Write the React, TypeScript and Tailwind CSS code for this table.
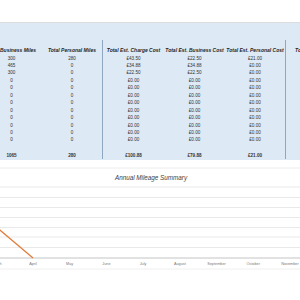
import React from "react";

const zeros = (n: number, v: string) => Array.from({ length: n }, () => v);

const columns = [
  {
    title: "Total Business Miles",
    values: ["300", "465", "300", ...zeros(9, "0")],
    total: "1065",
    border: false,
  },
  {
    title: "Total Personal Miles",
    values: ["280", ...zeros(11, "0")],
    total: "280",
    border: true,
  },
  {
    title: "Total Est. Charge Cost",
    values: ["£43.50", "£34.88", "£22.50", ...zeros(9, "£0.00")],
    total: "£100.88",
    border: false,
  },
  {
    title: "Total Est. Business Cost",
    values: ["£22.50", "£34.88", "£22.50", ...zeros(9, "£0.00")],
    total: "£79.88",
    border: false,
  },
  {
    title: "Total Est. Personal Cost",
    values: ["£21.00", ...zeros(11, "£0.00")],
    total: "£21.00",
    border: true,
  },
  {
    title: "Total Est. Savings",
    values: [] as string[],
    total: "",
    border: false,
  },
];

const months = [
  "March",
  "April",
  "May",
  "June",
  "July",
  "August",
  "September",
  "October",
  "November",
];

const gridLines = [27, 37.5, 47.5, 57.5, 67.5, 77, 87.5];

const Chart = () => {
  const monthX = (i: number) => -3.7 + i * 36.7;
  return (
    <svg width="300" height="140" viewBox="0 0 300 140" className="block">
      <line x1="0" y1="8" x2="300" y2="8" stroke="#ececec" strokeWidth="1" />
      <text
        x="151"
        y="20"
        textAnchor="middle"
        fontSize="6.3"
        fontStyle="italic"
        fill="#404040"
        fontFamily="'Liberation Sans', sans-serif"
      >
        Annual Mileage Summary
      </text>
      {gridLines.map((y) => (
        <line key={y} x1="0" y1={y} x2="300" y2={y} stroke="#e9e9e9" strokeWidth="1" />
      ))}
      <line x1="0" y1="98" x2="300" y2="98" stroke="#c4c4c4" strokeWidth="1" />
      <polyline
        points={`${monthX(0)},67 ${monthX(1)},98`}
        fill="none"
        stroke="#e07b39"
        strokeWidth="1.2"
      />
      {months.map((m, i) => (
        <text
          key={m}
          x={monthX(i)}
          y="104.5"
          textAnchor="middle"
          fontSize="3.8"
          fill="#7a7a7a"
          fontFamily="'Liberation Sans', sans-serif"
        >
          {m}
        </text>
      ))}
      <line x1="0" y1="109" x2="300" y2="109" stroke="#f0f0f0" strokeWidth="1" />
    </svg>
  );
};

const App = () => {
  return (
    <div
      className="w-[300px] h-[300px] overflow-hidden bg-white text-[#333333]"
      style={{ fontFamily: "'Liberation Sans', Arial, sans-serif" }}
    >
      <div className="h-[23px] border-b border-[#dcdcdc] bg-white" />
      <div className="h-[137px] bg-[#dde9f5] overflow-hidden pt-[17px]">
        <div className="flex ml-[-19px]">
          {columns.map((col) => (
            <div
              key={col.title}
              className={`w-[61px] shrink-0 h-[119px] text-center ${
                col.border ? "border-r border-[#8fa7c0]" : ""
              }`}
            >
              <div className="mt-[7px] h-[6px] leading-[6px] text-[5px] font-bold italic whitespace-nowrap text-[#262626]">
                {col.title}
              </div>
              <div className="mt-[1.6px]">
                {col.values.map((v, i) => (
                  <div key={i} className="h-[7.45px] leading-[7.45px] text-[4.6px] whitespace-nowrap">
                    {v}
                  </div>
                ))}
              </div>
              {col.total && (
                <div className="mt-[8.3px] h-[7.45px] leading-[7.45px] text-[4.6px] font-bold whitespace-nowrap">
                  {col.total}
                </div>
              )}
            </div>
          ))}
        </div>
      </div>
      <Chart />
    </div>
  );
};

export default App;
